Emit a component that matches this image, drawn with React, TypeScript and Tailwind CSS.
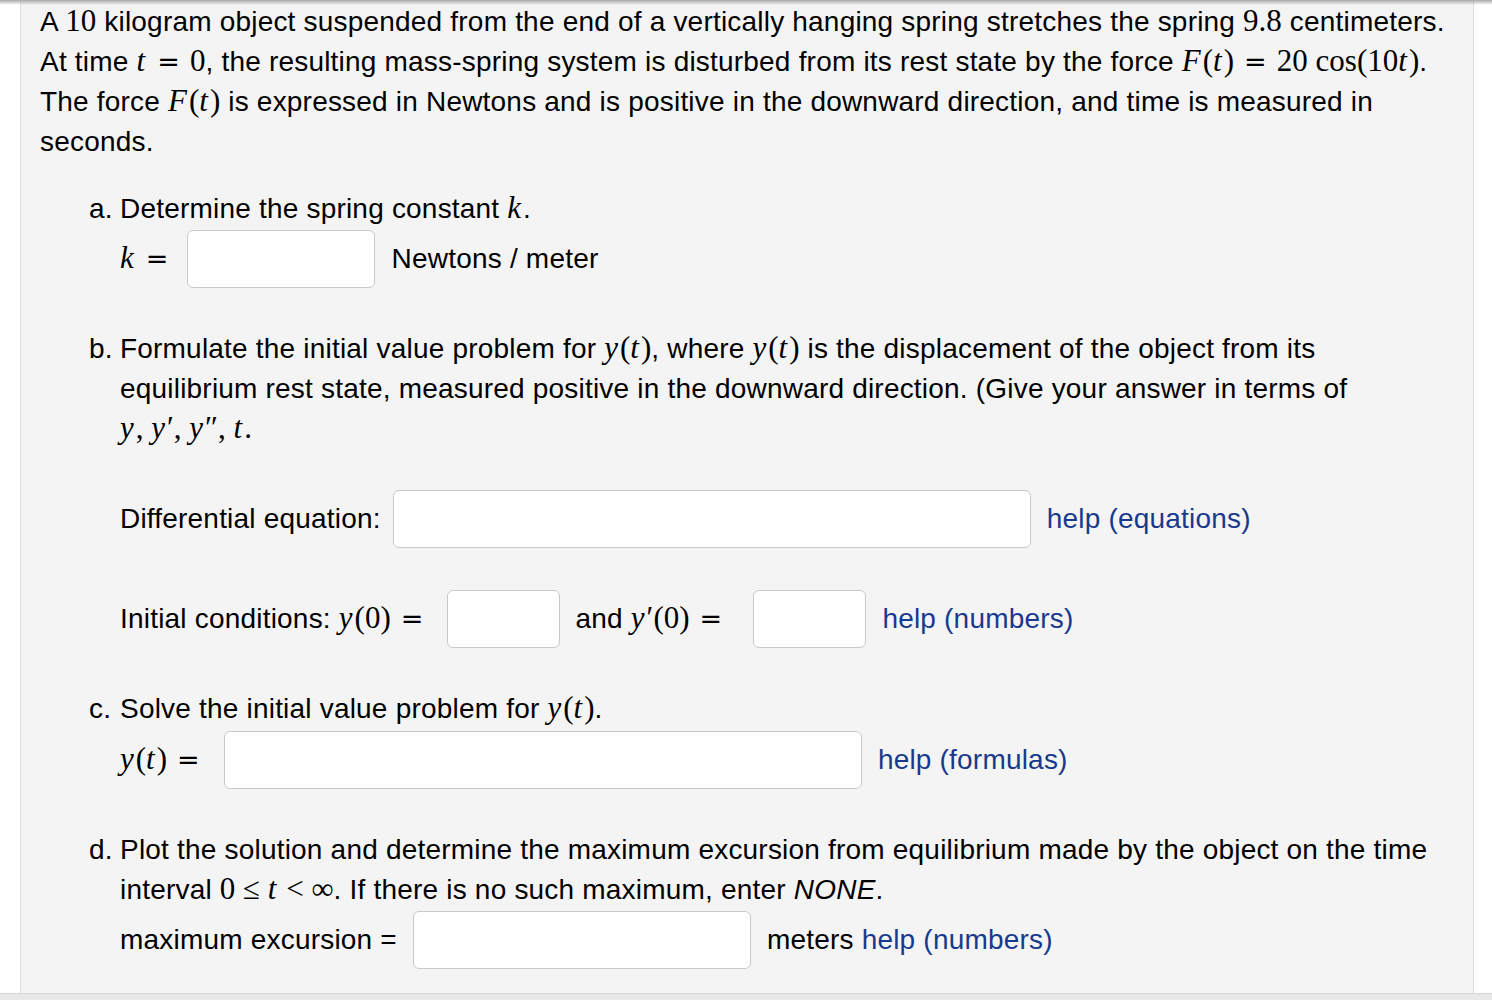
import React from 'react'

function M({ children }: { children: React.ReactNode }) {
  return <span className="font-['Liberation_Serif',serif] text-[31px] leading-none tracking-normal">{children}</span>
}

function V({ children }: { children: React.ReactNode }) {
  return <i className="font-['Liberation_Serif',serif] text-[31px] leading-none tracking-normal pr-[2px]">{children}</i>
}

function Eq() {
  return <span className="font-['DejaVu_Sans',sans-serif] text-[27px] leading-none mx-[10px]">=</span>
}

function Box({ w }: { w: string }) {
  return <input className={`${w} h-[58px] shrink-0 rounded-[6px] border border-[#c9c9c9] bg-white outline-none`} />
}

function Help({ children }: { children: React.ReactNode }) {
  return <a href="#" className="text-[#183a8c]">{children}</a>
}

export default function App() {
  return (
    <div className="relative h-[1000px] w-full overflow-hidden bg-white font-['Liberation_Sans',Arial,sans-serif] text-[28px] leading-[40px] tracking-[0.2px] text-black">
      <div className="absolute inset-x-0 top-0 h-[5px] bg-linear-to-b from-[#a9a9a9] to-transparent" />

      <div className="ml-[20px] h-[993px] w-[1454px] border-x border-[#dcdcdc] bg-[#f4f4f4] pl-[19px] pt-[2px]">
        {/* Problem statement */}
        <p className="whitespace-nowrap">
          A <M>10</M> kilogram object suspended from the end of a vertically hanging spring stretches the spring <M>9.8</M> centimeters.
          <br />
          At time <V>t</V><Eq /><M>0</M>, the resulting mass-spring system is disturbed from its rest state by the force <V>F</V><M>(</M><V>t</V><M>)</M><Eq /><M>20 cos(10</M><V>t</V><M>)</M>.
          <br />
          The force <V>F</V><M>(</M><V>t</V><M>)</M> is expressed in Newtons and is positive in the downward direction, and time is measured in
          <br />
          seconds.
        </p>

        <div className="ml-[49px]">
          {/* a */}
          <div className="mt-[27px] flex">
            <div className="w-[31px] shrink-0">a.</div>
            <div>
              <div>Determine the spring constant <V>k</V>.</div>
              <div className="mt-[1px] flex h-[58px] items-center">
                <span><V>k</V><Eq /></span>
                <span className="ml-[8px]"><Box w="w-[188px]" /></span>
                <span className="ml-[17px]">Newtons / meter</span>
              </div>
            </div>
          </div>

          {/* b */}
          <div className="mt-[41px] flex">
            <div className="w-[31px] shrink-0">b.</div>
            <div>
              <div className="whitespace-nowrap">
                Formulate the initial value problem for <V>y</V><M>(</M><V>t</V><M>)</M>, where <V>y</V><M>(</M><V>t</V><M>)</M> is the displacement of the object from its
                <br />
                equilibrium rest state, measured positive in the downward direction. (Give your answer in terms of
                <br />
                <V>y</V><M>, </M><V>y</V><M>′, </M><V>y</V><M>″, </M><V>t</V><M>.</M>
              </div>

              <div className="mt-[41px] flex h-[58px] items-center">
                <span>Differential equation:</span>
                <span className="ml-[12px]"><Box w="w-[638px]" /></span>
                <span className="ml-[16px]"><Help>help (equations)</Help></span>
              </div>

              <div className="mt-[42px] flex h-[58px] items-center">
                <span>Initial conditions: <V>y</V><M>(0)</M><Eq /></span>
                <span className="ml-[13px]"><Box w="w-[113px]" /></span>
                <span className="ml-[16px]">and <V>y</V><M>′(0)</M><Eq /></span>
                <span className="ml-[21px]"><Box w="w-[113px]" /></span>
                <span className="ml-[16px]"><Help>help (numbers)</Help></span>
              </div>
            </div>
          </div>

          {/* c */}
          <div className="mt-[41px] flex">
            <div className="w-[31px] shrink-0">c.</div>
            <div>
              <div>Solve the initial value problem for <V>y</V><M>(</M><V>t</V><M>)</M>.</div>
              <div className="mt-[2px] flex h-[58px] items-center">
                <span><V>y</V><M>(</M><V>t</V><M>)</M><Eq /></span>
                <span className="ml-[14px]"><Box w="w-[638px]" /></span>
                <span className="ml-[16px]"><Help>help (formulas)</Help></span>
              </div>
            </div>
          </div>

          {/* d */}
          <div className="mt-[41px] flex">
            <div className="w-[31px] shrink-0">d.</div>
            <div>
              <div className="whitespace-nowrap">
                Plot the solution and determine the maximum excursion from equilibrium made by the object on the time
                <br />
                interval <M>0 ≤ </M><V>t</V><M> &lt; ∞</M>. If there is no such maximum, enter <i>NONE</i>.
              </div>
              <div className="mt-[1px] flex h-[58px] items-center">
                <span>maximum excursion =</span>
                <span className="ml-[16px]"><Box w="w-[338px]" /></span>
                <span className="ml-[16px] whitespace-pre">meters <Help>help (numbers)</Help></span>
              </div>
            </div>
          </div>
        </div>
      </div>

      <div className="h-[7px] border-t border-[#d6d6d6] bg-[#e8e8e8]" />
    </div>
  )
}
